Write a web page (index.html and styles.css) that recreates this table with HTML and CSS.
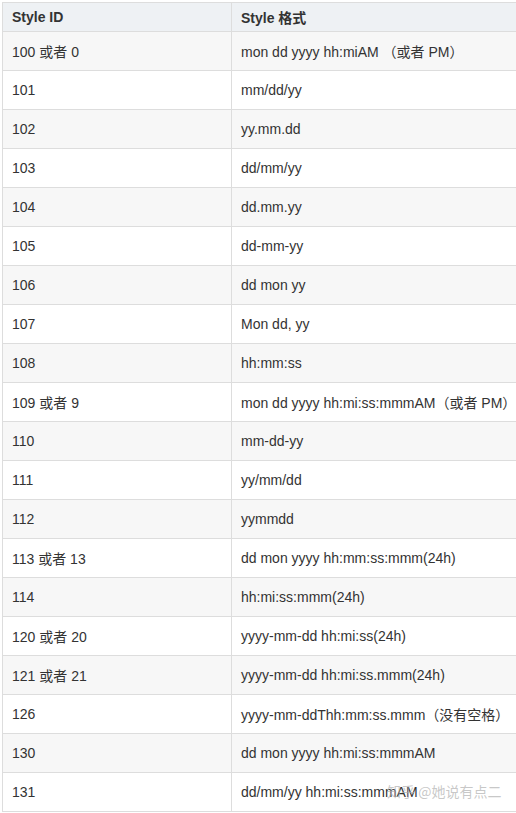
FILE: index.html
```html
<!DOCTYPE html>
<html>
<head>
<meta charset="utf-8">
<link rel="stylesheet" href="styles.css">
</head>
<body>
<div class="page">
<table class="fmt">
<thead>
<tr><th class="c1">Style ID</th><th class="c2">Style 格式</th></tr>
</thead>
<tbody>
<tr><td>100 或者 0</td><td>mon dd yyyy hh:miAM （或者 PM）</td></tr>
<tr><td>101</td><td>mm/dd/yy</td></tr>
<tr><td>102</td><td>yy.mm.dd</td></tr>
<tr><td>103</td><td>dd/mm/yy</td></tr>
<tr><td>104</td><td>dd.mm.yy</td></tr>
<tr><td>105</td><td>dd-mm-yy</td></tr>
<tr><td>106</td><td>dd mon yy</td></tr>
<tr><td>107</td><td>Mon dd, yy</td></tr>
<tr><td>108</td><td>hh:mm:ss</td></tr>
<tr><td>109 或者 9</td><td>mon dd yyyy hh:mi:ss:mmmAM（或者 PM）</td></tr>
<tr><td>110</td><td>mm-dd-yy</td></tr>
<tr><td>111</td><td>yy/mm/dd</td></tr>
<tr><td>112</td><td>yymmdd</td></tr>
<tr><td>113 或者 13</td><td>dd mon yyyy hh:mm:ss:mmm(24h)</td></tr>
<tr><td>114</td><td>hh:mi:ss:mmm(24h)</td></tr>
<tr><td>120 或者 20</td><td>yyyy-mm-dd hh:mi:ss(24h)</td></tr>
<tr><td>121 或者 21</td><td>yyyy-mm-dd hh:mi:ss.mmm(24h)</td></tr>
<tr><td>126</td><td>yyyy-mm-ddThh:mm:ss.mmm（没有空格）</td></tr>
<tr><td>130</td><td>dd mon yyyy hh:mi:ss:mmmAM</td></tr>
<tr><td>131</td><td>dd/mm/yy hh:mi:ss:mmmAM</td></tr>
</tbody>
</table>
<div class="watermark">知乎 @她说有点二</div>
</div>
</body>
</html>
```
FILE: styles.css
```css
html, body {
  margin: 0;
  padding: 0;
  background: #ffffff;
  overflow: hidden;
}
.page {
  position: relative;
  padding: 2px 0 0 2px;
  width: 516px;
  height: 813px;
  box-sizing: border-box;
}
.fmt {
  border-collapse: collapse;
  width: 514px;
  font-family: "Liberation Sans", Arial, "Noto Sans CJK SC", sans-serif;
  font-size: 14px;
  color: #333333;
  table-layout: fixed;
}
.fmt th, .fmt td {
  border: 1px solid #dddddd;
  text-align: left;
  padding: 0 9px;
  white-space: nowrap;
  overflow: visible;
}
.fmt th:last-child, .fmt td:last-child {
  border-right: none;
}
.fmt .c1 { width: 210px; }
.fmt th {
  height: 28px;
  background: #eef1f4;
  font-weight: bold;
  color: #333333;
}
.fmt td {
  height: 38px;
}
.fmt tbody tr:nth-child(odd) td {
  background: #f7f7f7;
}
.watermark {
  position: absolute;
  left: 387px;
  top: 781px;
  white-space: nowrap;
  font-family: "Noto Sans CJK SC", sans-serif;
  font-size: 14px;
  line-height: 20px;
  color: rgba(175, 175, 175, 0.7);
}
```
